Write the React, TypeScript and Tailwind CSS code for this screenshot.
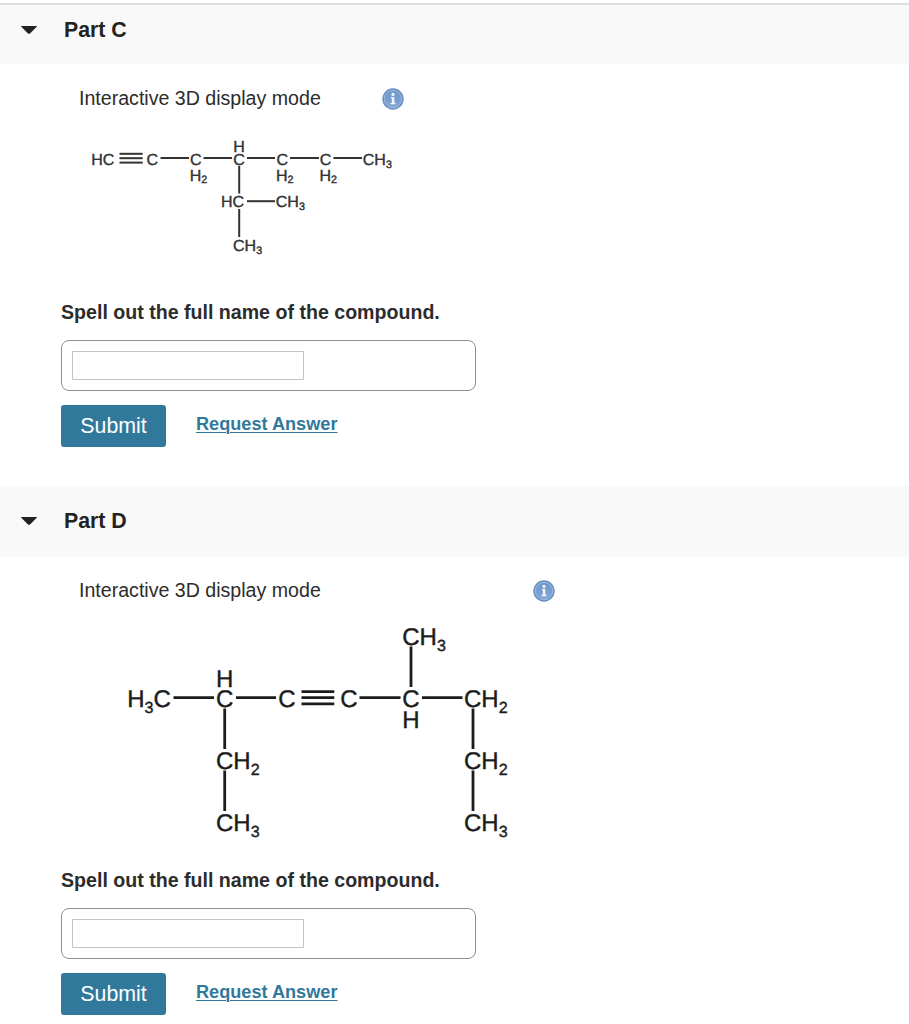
import React from "react";

type Line = [number, number, number, number];

interface Atom {
  x: number;
  y: number;
  // digits are drawn as subscripts
  text: string;
}

interface Molecule {
  viewBox: string;
  size: number;
  subShift: number;
  stroke: number;
  color: string;
  atoms: Atom[];
  bonds: Line[];
}

const ethynylHeptane: Molecule = {
  viewBox: "61 130 415 132",
  size: 16,
  subShift: 2.8,
  stroke: 2,
  color: "#333333",
  atoms: [
    { x: 91.2, y: 164.8, text: "HC" },
    { x: 146.5, y: 164.8, text: "C" },
    { x: 189.9, y: 164.8, text: "C" },
    { x: 189.7, y: 180.6, text: "H2" },
    { x: 233.2, y: 151.6, text: "H" },
    { x: 233.2, y: 164.8, text: "C" },
    { x: 276.5, y: 164.8, text: "C" },
    { x: 276, y: 180.6, text: "H2" },
    { x: 319.8, y: 164.8, text: "C" },
    { x: 319.4, y: 180.6, text: "H2" },
    { x: 362.8, y: 164.8, text: "CH3" },
    { x: 221, y: 207.3, text: "HC" },
    { x: 275.8, y: 207.3, text: "CH3" },
    { x: 233, y: 250.8, text: "CH3" },
  ],
  bonds: [
    [119.5, 153.8, 142.7, 153.8],
    [119.5, 158.2, 142.7, 158.2],
    [119.5, 162.6, 142.7, 162.6],
    [160.5, 158, 189, 158],
    [203.5, 158, 232, 158],
    [247, 158, 275, 158],
    [290, 158, 319, 158],
    [333.5, 158, 362, 158],
    [239.2, 166, 239.2, 193.5],
    [247, 201.2, 275, 201.2],
    [239.2, 209, 239.2, 237],
  ],
};

const dimethylNonyne: Molecule = {
  viewBox: "61 616 476 230",
  size: 24,
  subShift: 5.8,
  stroke: 2.8,
  color: "#1c1c1c",
  atoms: [
    { x: 127.2, y: 707.2, text: "H3C" },
    { x: 216, y: 687.4, text: "H" },
    { x: 216, y: 707.2, text: "C" },
    { x: 216, y: 769, text: "CH2" },
    { x: 216, y: 831, text: "CH3" },
    { x: 278.2, y: 707.2, text: "C" },
    { x: 340.2, y: 707.2, text: "C" },
    { x: 402.2, y: 645, text: "CH3" },
    { x: 402.2, y: 707.2, text: "C" },
    { x: 402.2, y: 728.2, text: "H" },
    { x: 464, y: 707.2, text: "CH2" },
    { x: 464, y: 769, text: "CH2" },
    { x: 464, y: 831, text: "CH3" },
  ],
  bonds: [
    [173.5, 697.7, 214, 697.7],
    [236, 697.7, 276, 697.7],
    [301.5, 691.6, 334.3, 691.6],
    [301.5, 697.7, 334.3, 697.7],
    [301.5, 703.8, 334.3, 703.8],
    [359.5, 697.7, 400.5, 697.7],
    [422, 697.7, 462.5, 697.7],
    [224.7, 708.5, 224.7, 749],
    [224.7, 770.5, 224.7, 811],
    [411, 646.5, 411, 687],
    [473, 708.5, 473, 749],
    [473, 770.5, 473, 811],
  ],
};

const Structure = ({ molecule, className }: { molecule: Molecule; className: string }) => {
  const { viewBox, size, subShift, stroke, color, atoms, bonds } = molecule;

  return (
    <svg viewBox={viewBox} className={`block ${className}`} fill={color} stroke={color}>
      {bonds.map(([x1, y1, x2, y2], i) => (
        <line key={i} x1={x1} y1={y1} x2={x2} y2={y2} strokeWidth={stroke} />
      ))}
      {atoms.map(({ x, y, text }, i) => {
        let lowered = false;
        return (
          <text
            key={i}
            x={x}
            y={y}
            fontSize={size}
            strokeWidth={0.4}
            textRendering="geometricPrecision"
          >
            {text.split("").map((ch, j) => {
              const sub = /\d/.test(ch);
              const dy = sub && !lowered ? subShift : !sub && lowered ? -subShift : 0;
              lowered = sub;
              return (
                <tspan key={j} dy={dy} fontSize={sub ? size * 0.67 : size}>
                  {ch}
                </tspan>
              );
            })}
          </text>
        );
      })}
    </svg>
  );
};

const InfoIcon = () => (
  <svg viewBox="0 0 22 22" className="block size-[22px]">
    <defs>
      <linearGradient id="info-fill" x1="0" y1="0" x2="0" y2="1">
        <stop offset="0" stopColor="#6f97c9" />
        <stop offset="1" stopColor="#7fa6d6" />
      </linearGradient>
    </defs>
    <circle cx="11" cy="11" r="10.7" fill="#6a8fbf" />
    <circle cx="11" cy="11" r="8.7" fill="url(#info-fill)" stroke="#9dbce0" strokeWidth="1" />
    <circle cx="11" cy="6.4" r="1.6" fill="#f4f8fd" />
    <path d="M9 9.1h3.3v5.6h1.2v1.5h-5v-1.5h1.4v-4.2H9z" fill="#f4f8fd" />
  </svg>
);

const PartHeader = ({ title, className }: { title: string; className: string }) => (
  <header className={`flex items-start bg-[#f9f9f9] pl-5 ${className}`}>
    <svg viewBox="0 0 18 10" className="mt-[7px] h-2.5 w-[18px]" fill="#222222">
      <path d="M1.6 1h14.8q1 0 .3.8L10 8.4q-1 .9-2 0L1.3 1.8Q.6 1 1.6 1z" />
    </svg>
    <h2 className="ml-[26px] text-[21.3px] leading-6 font-bold text-[#222222]">{title}</h2>
  </header>
);

const AnswerForm = () => (
  <form onSubmit={(e) => e.preventDefault()}>
    <p className="text-[19.6px] leading-6 font-bold text-[#2c2c2c]">
      Spell out the full name of the compound.
    </p>
    <div className="mt-4 h-[51px] w-[415px] rounded-lg border border-[#8f8f8f] py-2.5 pl-2.5">
      <input
        type="text"
        aria-label="Compound name"
        className="block h-[29px] w-[232px] border border-[#c4c4c4] bg-white px-2 outline-none"
      />
    </div>
    <div className="mt-3.5 flex items-start">
      <button
        type="submit"
        className="h-[42px] w-[105px] rounded-[3px] bg-[#31799b] pt-0.5 text-[21.3px] text-white"
      >
        Submit
      </button>
      <a
        href="#"
        className="mt-[7px] ml-[30px] text-[18.15px] leading-6 font-bold text-[#31799b] underline decoration-1 underline-offset-2"
      >
        Request Answer
      </a>
    </div>
  </form>
);

const App = () => {
  return (
    <main className="h-screen overflow-hidden bg-white font-['Liberation_Sans',Arial,sans-serif] text-[#2c2c2c]">
      <section className="pt-[3px]">
        <PartHeader title="Part C" className="h-[61px] border-t-2 border-[#e0e0e0] pt-[13px]" />
        <div className="h-[422px] pt-[22px] pl-[61px]">
          <div className="flex h-11 items-start pl-[18px]">
            <p className="w-[303px] text-[19.6px] leading-6">Interactive 3D display mode</p>
            <div className="mt-0.5">
              <InfoIcon />
            </div>
          </div>
          <Structure molecule={ethynylHeptane} className="h-[132px] w-[415px]" />
          <div className="mt-[38px]">
            <AnswerForm />
          </div>
        </div>
      </section>

      <section>
        <PartHeader title="Part D" className="h-[71px] pt-[23px]" />
        <div className="pt-[21px] pl-[61px]">
          <div className="flex h-[38px] items-start pl-[18px]">
            <p className="w-[454px] text-[19.6px] leading-6">Interactive 3D display mode</p>
            <div className="mt-0.5">
              <InfoIcon />
            </div>
          </div>
          <Structure molecule={dimethylNonyne} className="h-[230px] w-[476px]" />
          <div className="mt-[22px]">
            <AnswerForm />
          </div>
        </div>
      </section>
    </main>
  );
};

export default App;
